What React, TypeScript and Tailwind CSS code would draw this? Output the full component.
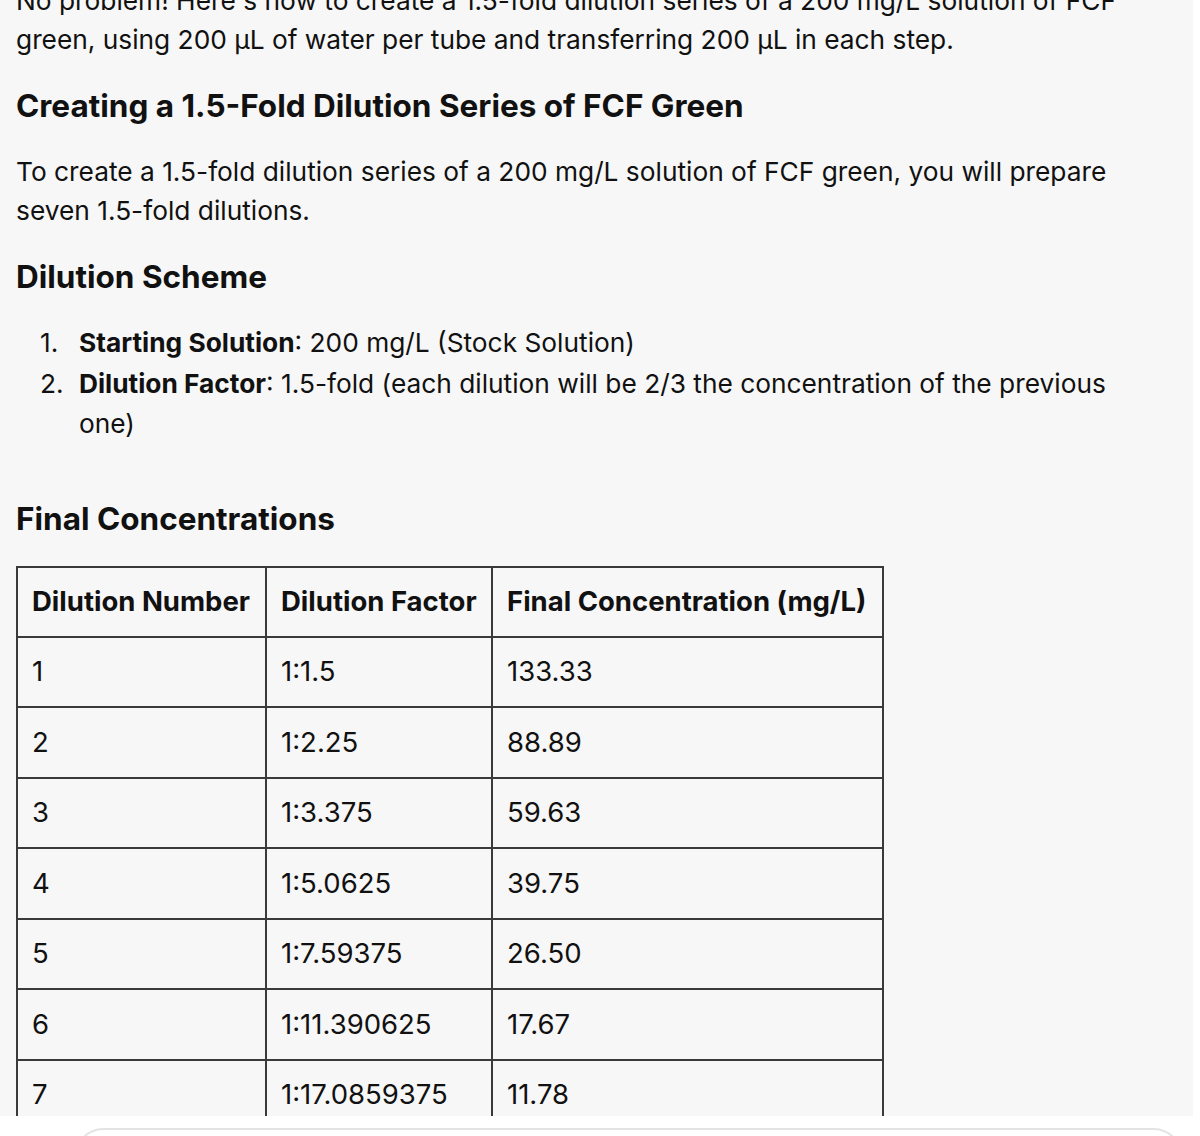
import React from "react";

const rows = [
  ["1", "1:1.5", "133.33"],
  ["2", "1:2.25", "88.89"],
  ["3", "1:3.375", "59.63"],
  ["4", "1:5.0625", "39.75"],
  ["5", "1:7.59375", "26.50"],
  ["6", "1:11.390625", "17.67"],
  ["7", "1:17.0859375", "11.78"],
];

const cell = "border-2 border-[#3a3a3a] px-[14px] text-left whitespace-nowrap";

export default function App() {
  return (
    <div
      className="w-[1200px] h-[1136px] bg-white overflow-hidden text-[#111111]"
      style={{ fontFamily: "Inter, 'Noto Sans', sans-serif" }}
    >
      <div className="w-[1193px] h-[1116px] bg-[#f7f7f7] overflow-hidden">
        <div className="w-[1140px] pl-4 -mt-[19px] text-[26.3px] leading-[39px]">
          <p>
            No problem! Here's how to create a 1.5-fold dilution series of a 200 mg/L solution of FCF
            green, using 200 µL of water per tube and transferring 200 µL in each step.
          </p>
          <h3 className="mt-[27px] text-[31.5px] leading-[40px] font-bold">
            Creating a 1.5-Fold Dilution Series of FCF Green
          </h3>
          <p className="mt-[26px]">
            To create a 1.5-fold dilution series of a 200 mg/L solution of FCF green, you will prepare
            seven 1.5-fold dilutions.
          </p>
          <h4 className="mt-[27px] text-[31.5px] leading-[40px] font-bold">Dilution Scheme</h4>
          <ol className="mt-[26px] leading-[40.5px]">
            <li className="flex">
              <span className="ml-6 w-[39px] shrink-0">1.</span>
              <span>
                <strong className="font-bold">Starting Solution</strong>: 200 mg/L (Stock Solution)
              </span>
            </li>
            <li className="flex">
              <span className="ml-6 w-[39px] shrink-0">2.</span>
              <span>
                <strong className="font-bold">Dilution Factor</strong>: 1.5-fold (each dilution will be
                2/3 the concentration of the previous one)
              </span>
            </li>
          </ol>
          <h4 className="mt-[54px] text-[31.5px] leading-[40px] font-bold">Final Concentrations</h4>
          <table className="mt-[27px] w-[866px] table-fixed border-collapse border-2 border-[#3a3a3a] text-[27.5px]">
            <colgroup>
              <col className="w-[249px]" />
              <col className="w-[226px]" />
              <col className="w-[391px]" />
            </colgroup>
            <thead>
              <tr className="h-[70px]">
                <th className={`font-bold ${cell}`}>Dilution Number</th>
                <th className={`font-bold ${cell}`}>Dilution Factor</th>
                <th className={`font-bold ${cell}`}>Final Concentration (mg/L)</th>
              </tr>
            </thead>
            <tbody>
              {rows.map((r) => (
                <tr key={r[0]} className="h-[70.5px]">
                  <td className={cell}>{r[0]}</td>
                  <td className={cell}>{r[1]}</td>
                  <td className={cell}>{r[2]}</td>
                </tr>
              ))}
            </tbody>
          </table>
        </div>
      </div>
      <div className="pl-[75px] pr-[18px] pt-[12px]">
        <div className="h-[60px] rounded-t-[28px] border-2 border-b-0 border-[#e3e3e3] bg-white" />
      </div>
    </div>
  );
}
